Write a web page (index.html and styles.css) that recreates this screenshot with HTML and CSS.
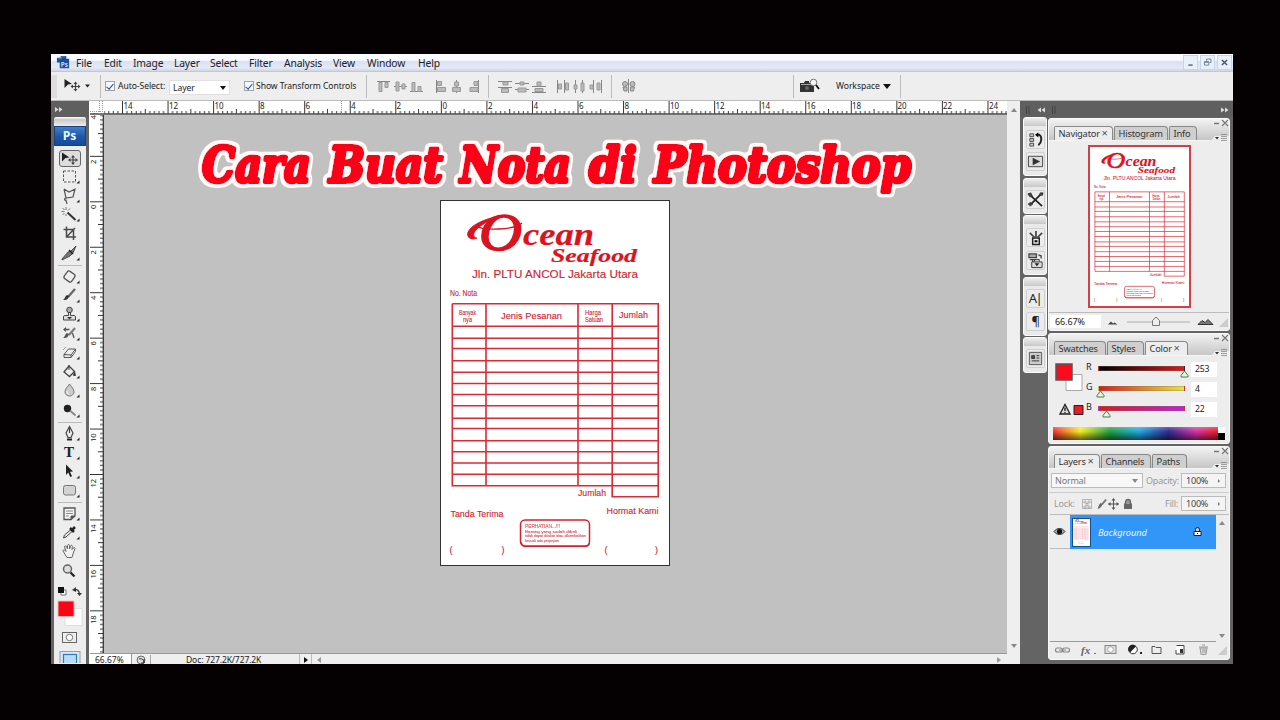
FILE: index.html
```html
<!DOCTYPE html>
<html lang="id">
<head>
<meta charset="utf-8">
<title>Cara Buat Nota di Photoshop</title>
<link rel="stylesheet" href="styles.css">
</head>
<body>
<div class="window">
  <header class="menubar">
    <svg class="app-logo" viewBox="0 0 16 16"><path d="M1 3h4V1h6v3h3v10H4V8H1z" fill="#1b4e94"/><path d="M2 4h4V2h4" stroke="#4a86c8" fill="none"/><text x="5" y="13" font-size="7" fill="#b9dcff">Ps</text></svg>
    <nav class="menu"><span>File</span><span>Edit</span><span>Image</span><span>Layer</span><span>Select</span><span>Filter</span><span>Analysis</span><span>View</span><span>Window</span><span>Help</span></nav>
    <div class="win-buttons">
      <svg viewBox="0 0 15 15"><path d="M5 10.5h5" stroke="#4d6074" stroke-width="1.6"/></svg>
      <svg viewBox="0 0 15 15"><path d="M6.500 6V3.500h5v4H10M4 6.500h5v4H4zM4 7.300h5" stroke="#66788a" fill="none"/></svg>
      <svg viewBox="0 0 15 15"><path d="M4.500 4.500l6 6M10.500 4.500l-6 6" stroke="#44576b" stroke-width="1.600"/></svg>
    </div>
  </header>

  <div class="options">
    <div class="opt move">
      <svg width="34" height="24" viewBox="0 0 34 24"><use href="#i-move" x="4" y="1"/><path d="M28 10.500h5l-2.500 3z" fill="#222"/></svg>
    </div>
    <div class="opt auto">
      <i class="check"></i><span class="t-auto">Auto-Select:</span>
      <div class="combo"><span>Layer</span><b class="arrow"></b></div>
      <i class="check second"></i><span class="t-show">Show Transform Controls</span>
    </div>
    <div class="opt align">
      <svg width="112" height="24" viewBox="374 74 112 24" fill="#bbb" stroke="#999">
        <path d="M377 81.500h13M394 86.500h13M410 91.500h13M436.500 80v13M456.500 80v13M478.500 80v13" stroke="#858585"/>
        <path d="M379 82.500h3v9h-3zM385 82.500h3v5h-3zM396 82h3v9h-3zM402 84h3v5h-3zM412 82.500h3v9h-3zM418 86.500h3v5h-3zM437.500 81.500h4v4h-4zM437.500 87.500h8v4h-8zM454.500 82h4v4h-4zM452.500 87.500h8v4h-8zM474 81.500h4v4h-4zM470 87.500h8v4h-8z"/>
      </svg>
    </div>
    <div class="opt dist">
      <svg width="118" height="24" viewBox="490 74 118 24" fill="#bbb" stroke="#999">
        <path d="M499 81.500h14M499 87.500h14M516 83.500h14M516 89.500h14M533 86.500h14M533 92.500h14M558.500 80v13M565.500 80v13M576.500 80v13M583.500 80v13M594.500 80v13M602.500 80v13" stroke="#858585"/>
        <path d="M504 82h5v3h-5zM502.500 88.500h7v4h-7zM521 82h4v3h-4zM519 88h8v4h-8zM538 82h4v4h-4zM536 88.500h8v3h-8zM559.500 84h3v5h-3zM566.500 83h3v7h-3zM575 85h3v4h-3zM582 83h3v8h-3zM591 85h3v4h-3zM598 83h3v7h-3z"/>
      </svg>
    </div>
    <div class="opt auto-align">
      <svg width="30" height="24" viewBox="614 74 30 24" fill="#bbb" stroke="#888"><path d="M628.500 79v14"/><circle cx="625" cy="84" r="2.500"/><circle cx="632.500" cy="84" r="2.500"/><path d="M623 87h4v4h-3zM630.500 87h4l-1 4h-3z"/></svg>
    </div>
    <div class="opt bridge">
      <svg width="42" height="24" viewBox="793 74 42 24"><path d="M799 83h4l1-2h4v2h5v9h-14z" fill="#333"/><path d="M800 84.500h12" stroke="#aaa"/><circle cx="806" cy="88" r="2" fill="#666"/><circle cx="812.500" cy="82.500" r="3.300" fill="#f4f4f4" stroke="#777"/><path d="M815 85l3 4" stroke="#111" stroke-width="1.800"/></svg>
      <span class="t-ws">Workspace</span><b class="arrow"></b>
    </div>
  </div>

  <main class="work">
    <aside class="toolbox">
      <div class="dock-head"><svg width="10" height="7" viewBox="0 0 10 7"><path d="M1 1l3.500 2.500L1 6zM5 1l3.500 2.500L5 6z" fill="#ddd"/></svg></div>
      <div class="tools">
        <div class="grip"></div>
        <div class="ps">Ps</div>
        <div class="tg first">
          <div class="tool on"><svg viewBox="0 0 24 19"><use href="#i-move" x="1.500" y="-.5"/></svg></div>
          <div class="tool"><svg viewBox="0 0 24 19"><rect x="5.500" y="4" width="12" height="11" fill="none" stroke="#555" stroke-dasharray="2.500 1.500"/><use href="#i-c"/></svg></div>
          <div class="tool"><svg viewBox="0 0 24 19"><path d="M6 3l5 3 6-3-2 8-7 1-2-9M8 12c-2 0-2 3 0 2l1 4" fill="none" stroke="#555" stroke-width="1.200"/><use href="#i-c"/></svg></div>
          <div class="tool"><svg viewBox="0 0 24 19"><path d="M9.500 7.500l8 7.500" stroke="#333" stroke-width="2"/><path d="M8 2v3M8 9v2M3.500 6.500h3M10 5.500l2-2M4.500 3l2 2M4.500 10l2-2" stroke="#777"/><use href="#i-c"/></svg></div>
          <div class="tool"><svg viewBox="0 0 24 19"><path d="M8.500 2.500v10.500H18M5.500 5.500h10V16M9 12.500l8-8.500" fill="none" stroke="#4a4a4a" stroke-width="1.500"/></svg></div>
          <div class="tool"><svg viewBox="0 0 24 19"><path d="M4 15L10 8l3-1 5-5-3 7-3 3-8 4z" fill="#777" stroke="#333" stroke-width=".8"/><path d="M11 6l4 4" stroke="#222" stroke-width="1.500"/><use href="#i-c"/></svg></div>
        </div>
        <hr>
        <div class="tg">
          <div class="tool"><svg viewBox="0 0 24 19"><rect x="7" y="5" width="9" height="9" rx="2" transform="rotate(35 11.500 9.500)" fill="#eee" stroke="#555" stroke-width="1.300"/><use href="#i-c"/></svg></div>
          <div class="tool"><svg viewBox="0 0 24 19"><path d="M17 3l-7 8" stroke="#666" stroke-width="2.300"/><path d="M11 10c-1 4-3 4-6 4 2-1 2-4 4-5z" fill="#333"/><use href="#i-c"/></svg></div>
          <div class="tool"><svg viewBox="0 0 24 19"><circle cx="11.500" cy="5" r="2.800" fill="#aaa" stroke="#444"/><path d="M10.500 7.500v3H6.500a1.500 1.500 0 00-1 1.500v3h12v-3a1.500 1.500 0 00-1-1.500h-4v-3z" fill="#ddd" stroke="#444"/><path d="M9 12h5l-2.500 2.500z" fill="#333"/><use href="#i-c"/></svg></div>
          <div class="tool"><svg viewBox="0 0 24 19"><path d="M17 4l-6 7" stroke="#777" stroke-width="2"/><path d="M11 10c-1 4-3 4-6 4 2-1 2-4 4-5z" fill="#555"/><path d="M6 5.500h5.500M14.500 9l1.500 5" fill="none" stroke="#555" stroke-width="1.300"/><path d="M8 3v5L5 5.500z" fill="#555"/><use href="#i-c"/></svg></div>
          <div class="tool"><svg viewBox="0 0 24 19"><path d="M6 11.500l4.500-5.500h7l-4.500 6zM6 11.500v3h7v-2.500M13 14.500l4.500-6V6" fill="#eee" stroke="#555"/><path d="M5 7l3-3" stroke="#999"/><use href="#i-c"/></svg></div>
          <div class="tool"><svg viewBox="0 0 24 19"><path d="M6 10l5-6 5.500 5.500-5 5z" fill="#eee" stroke="#444" stroke-width="1.300"/><path d="M11 8V3M16.500 9.500l1 4h-2z" fill="#333" stroke="#444"/><use href="#i-c"/></svg></div>
          <div class="tool"><svg viewBox="0 0 24 19"><path d="M11.500 3c2 3 4.500 5 4.500 8a4.500 4 0 01-9 0c0-3 2.500-5 4.500-8z" fill="#ccc" stroke="#777"/><path d="M9 10c0 2 1 3 2 3" stroke="#fff" fill="none"/><use href="#i-c"/></svg></div>
          <div class="tool"><svg viewBox="0 0 24 19"><circle cx="9.500" cy="7.500" r="3.700" fill="#222"/><path d="M12.500 10l5 4.500" stroke="#888" stroke-width="1.800"/><use href="#i-c"/></svg></div>
        </div>
        <hr>
        <div class="tg">
          <div class="tool"><svg viewBox="0 0 24 19"><path d="M11.500 2.500L8 9l2 4.500h3L15 9zM11.500 3v6" fill="#eee" stroke="#444" stroke-width="1.200"/><path d="M9 15.500h5" stroke="#222" stroke-width="2"/><use href="#i-c"/></svg></div>
          <div class="tool type">T<svg viewBox="0 0 24 19"><use href="#i-c"/></svg></div>
          <div class="tool"><svg viewBox="0 0 24 19"><path d="M8 2.500l7 7-3 .2 2 4.500-1.800.8-1.900-4.500L8 13z" fill="#222"/><use href="#i-c"/></svg></div>
          <div class="tool"><svg viewBox="0 0 24 19"><rect x="5.500" y="4.500" width="12" height="9.500" rx="2" fill="#d2d2d2" stroke="#777"/><use href="#i-c"/></svg></div>
        </div>
        <hr>
        <div class="tg">
          <div class="tool"><svg viewBox="0 0 24 19"><path d="M6 4h11v8l-4 3.500H6z" fill="#f4f4f4" stroke="#555" stroke-width="1.300"/><path d="M8 7h7M8 9.500h7M8 12h3" stroke="#888"/><path d="M13 15v-3h4" fill="#555" stroke="#555"/><use href="#i-c"/></svg></div>
          <div class="tool"><svg viewBox="0 0 24 19"><path d="M5.500 15l1-3 6-5 1.500 1.500-6 5.500z" fill="#eee" stroke="#444"/><path d="M12 5l4 4M14 7l3-3" stroke="#222" stroke-width="2.500"/><use href="#i-c"/></svg></div>
          <div class="tool"><svg viewBox="0 0 24 19"><path d="M8 14l-3-5c0-2 2-1 3 .5L6.500 5c0-1.500 1.800-1.500 2.200 0l.8 2V3.500c.2-1.500 2-1.200 2 0V7l1-3c.5-1.200 2-.8 1.800.6L14 7.500l1.500-1.700c1-.8 1.800 0 1.300 1.200L15 12l-1 3.500H9z" fill="#f2f2f2" stroke="#666"/></svg></div>
          <div class="tool"><svg viewBox="0 0 24 19"><circle cx="9.500" cy="7" r="4" fill="#ddd" stroke="#666" stroke-width="1.500"/><path d="M12.500 10.500l4 4" stroke="#222" stroke-width="2.300"/></svg></div>
        </div>
        <svg class="swatches" viewBox="54 583 32 81" width="32" height="81">
          <path d="M61 591h5v5h-5z" fill="#fff" stroke="#777"/><path d="M58 588h6v6h-6z" fill="#111"/>
          <path d="M74 591c3-1 5 0 5.500 4" stroke="#333" stroke-width="1.300" fill="none"/><path d="M76 588v5l-4-2zM77 594h5l-2.500 3z" fill="#333"/>
          <path d="M65 609.500h17v17H65z" fill="#fff" stroke="#ddd"/><path d="M58 602h16v15.500H58z" fill="#fb0516" stroke="#f2b8b8"/>
          <rect x="62.500" y="633.500" width="14" height="10" fill="#eee" stroke="#666"/><circle cx="69.500" cy="638.500" r="3.200" fill="#fff" stroke="#777"/>
          <rect x="60" y="652.500" width="20" height="14" fill="#d9e7f5" stroke="#99a"/><rect x="63.500" y="655.500" width="13" height="10" fill="#b7dcf6" stroke="#2f79b5" stroke-width="1.200"/>
        </svg>
      </div>
    </aside>

    <section class="doc">
      <svg class="hruler" viewBox="90 101 917 14" width="917" height="14">
        <defs><pattern id="ht" x="122" y="101" width="45.550" height="14" patternUnits="userSpaceOnUse">
          <path d="M.5 0v13" stroke="#333" stroke-width="1"/>
          <path d="M5 10v3M9.600 10v3M14.200 10v3M18.700 10v3M27.800 10v3M32.400 10v3M36.900 10v3M41.500 10v3" stroke="#333"/><path d="M23.300 8v5" stroke="#333"/></pattern></defs>
        <path d="M90 101h917v14H90z" fill="#fff"/><path d="M104 101h903v14H104z" fill="url(#ht)"/>
        <path d="M90 114h917" stroke="#444" stroke-width="1.400"/><path d="M102.500 101v14M99.500 101v14M341.500 101v13" stroke="#999" stroke-dasharray="1 1"/><path d="M90 111.500h14" stroke="#999" stroke-dasharray="1 1"/>
        <g class="rt"><text x="123.500" y="109">14</text><text x="169" y="109">12</text><text x="214.500" y="109">10</text><text x="260" y="109">8</text><text x="305.500" y="109">6</text><text x="351" y="109">4</text><text x="396.500" y="109">2</text><text x="442.500" y="109">0</text><text x="488" y="109">2</text><text x="533.500" y="109">4</text><text x="579" y="109">6</text><text x="624.500" y="109">8</text><text x="670" y="109">10</text><text x="715.500" y="109">12</text><text x="761" y="109">14</text><text x="806.500" y="109">16</text><text x="852" y="109">18</text><text x="897.500" y="109">20</text><text x="943" y="109">22</text><text x="989" y="109">24</text></g>
      </svg>
      <div class="doc-mid">
        <svg class="vruler" viewBox="90 115 14 538" width="14" height="538">
          <defs><pattern id="vt" x="90" y="201.300" width="14" height="45.450" patternUnits="userSpaceOnUse">
            <path d="M0 .5h13" stroke="#333"/><path d="M10 5h3M10 9.600h3M10 14.100h3M10 18.700h3M10 27.700h3M10 32.300h3M10 36.800h3M10 41.400h3M8 23.200h5" stroke="#333"/></pattern></defs>
          <path d="M90 115h14v538H90z" fill="#fff"/><path d="M90 115h14v538H90z" fill="url(#vt)"/><path d="M103.300 115v538" stroke="#333" stroke-width="1.300"/>
          <g class="rt v"><text transform="translate(96 119.500) rotate(-90)">4</text><text transform="translate(96 164) rotate(-90)">2</text><text transform="translate(96 209) rotate(-90)">0</text><text transform="translate(96 254.500) rotate(-90)">2</text><text transform="translate(96 300) rotate(-90)">4</text><text transform="translate(96 345.500) rotate(-90)">6</text><text transform="translate(96 391) rotate(-90)">8</text><text transform="translate(96 442) rotate(-90)">10</text><text transform="translate(96 487.500) rotate(-90)">12</text><text transform="translate(96 533) rotate(-90)">14</text><text transform="translate(96 578.500) rotate(-90)">16</text><text transform="translate(96 624) rotate(-90)">18</text></g>
        </svg>
        <svg class="canvas" viewBox="104 115 903 538" width="903" height="538">
          <defs>
            <filter id="halo" x="-5%" y="-20%" width="110%" height="140%">
              <feMorphology in="SourceAlpha" operator="dilate" radius="2"/><feGaussianBlur stdDeviation="1.500"/>
              <feColorMatrix values="0 0 0 0 1  0 0 0 0 .95  0 0 0 0 .94  0 0 0 6 -.5"/><feMerge><feMergeNode/><feMergeNode in="SourceGraphic"/></feMerge>
            </filter>
            <symbol id="nota" viewBox="441 201 228 364" preserveAspectRatio="none">
              <path d="M441 201h228v364H441z" fill="#fff"/>
              <g class="brand"><text class="big-o" x="479" y="250" font-size="52" textLength="43" lengthAdjust="spacingAndGlyphs">O</text>
              <path d="M477 238c-6 3-11-1-9-6 3-7 16-13 31-16-12 5-23 12-25 17-1 3 1 5 3 5z" stroke-width=".8"/>
              <path d="M476 226c8 5 38 4 46-3" fill="none" stroke-width="1.300"/>
              <text x="523" y="244.500" font-size="32" textLength="71" lengthAdjust="spacingAndGlyphs">cean</text>
              <text x="551" y="261.500" font-size="18.500" textLength="86" lengthAdjust="spacingAndGlyphs">Seafood</text></g>
              <g class="sans"><text x="472" y="277.500" font-size="10.500" textLength="166" lengthAdjust="spacingAndGlyphs">Jln. PLTU ANCOL Jakarta Utara</text>
              <text x="450" y="296" font-size="8.500" textLength="27" lengthAdjust="spacingAndGlyphs">No. Nota</text>
              <text x="459" y="314.500" font-size="7.500" textLength="17" lengthAdjust="spacingAndGlyphs">Banyak</text><text x="463" y="322" font-size="6.500" textLength="9" lengthAdjust="spacingAndGlyphs">nya</text>
              <text x="501" y="318.500" font-size="8.500" textLength="61" lengthAdjust="spacingAndGlyphs">Jenis Pesanan</text>
              <text x="585" y="314.500" font-size="7.500" textLength="16" lengthAdjust="spacingAndGlyphs">Harga</text><text x="585" y="322" font-size="6.500" textLength="18" lengthAdjust="spacingAndGlyphs">Satuan</text>
              <text x="619" y="318" font-size="8.500" textLength="29" lengthAdjust="spacingAndGlyphs">Jumlah</text>
              <text x="578" y="496" font-size="8.500" textLength="28" lengthAdjust="spacingAndGlyphs">Jumlah</text>
              <text x="450.500" y="516.500" font-size="8.500" textLength="53" lengthAdjust="spacingAndGlyphs">Tanda Terima</text>
              <text x="606.500" y="514" font-size="9" textLength="52" lengthAdjust="spacingAndGlyphs">Hormat Kami</text>
              <text x="449.500" y="552.500" font-size="9">(</text><text x="501.500" y="552.500" font-size="9">)</text><text x="604.500" y="552.500" font-size="9">(</text><text x="655" y="552.500" font-size="9">)</text>
              <g opacity=".8"><text x="525" y="527.500" font-size="5.500" textLength="35" lengthAdjust="spacingAndGlyphs">PERHATIAN...!!!</text>
              <text x="525" y="532.500" font-size="4.200" textLength="52" lengthAdjust="spacingAndGlyphs">Barang yang sudah dibeli</text>
              <text x="525" y="537" font-size="4.200" textLength="61" lengthAdjust="spacingAndGlyphs">tidak dapat ditukar atau dikembalikan</text>
              <text x="525" y="541.500" font-size="4.200" textLength="34" lengthAdjust="spacingAndGlyphs">kecuali ada perjanjian</text></g></g>
              <path d="M452.300 303.700h205.900v193h-46v-193M452.300 303.700v182h205.900M486 303.700v182M578 303.700v182M452.300 326.300h206M452.300 338.300h206M452.300 348.500h206M452.300 360.700h206M452.300 372.300h206M452.300 383.500h206M452.300 394.500h206M452.300 405.800h206M452.300 418.200h206M452.300 428.500h206M452.300 440.700h206M452.300 451.700h206M452.300 463h206M452.300 474.300h206" fill="none" stroke="#da2a35" stroke-width="1.600"/>
              <rect x="520.500" y="520" width="69" height="26" rx="4.500" fill="none" stroke="#d6202c" stroke-width="1.500"/><path d="M521 542q1 4.500 5 4.500h59q4 0 4.500-4" fill="none" stroke="#d6202c" stroke-width="1.200"/>
            </symbol>
          </defs>
          <rect x="440.500" y="200.500" width="229" height="365" fill="#fff" stroke="#333"/>
          <use href="#nota" x="441" y="201" width="228" height="364"/>
          <g class="headline" filter="url(#halo)">
            <text x="202" y="182.300" textLength="109" lengthAdjust="spacingAndGlyphs">Cara</text>
            <text x="329" y="182.300" textLength="114" lengthAdjust="spacingAndGlyphs">Buat</text>
            <text x="460" y="182.300" textLength="111" lengthAdjust="spacingAndGlyphs">Nota</text>
            <text x="589" y="182.300" textLength="48" lengthAdjust="spacingAndGlyphs">di</text>
            <text x="654" y="182.300" textLength="257" lengthAdjust="spacingAndGlyphs">Photoshop</text>
          </g>
        </svg>
      </div>
      <div class="status"><span class="zoom">66.67%</span><span class="ver"><svg width="11" height="10" viewBox="0 0 11 10"><circle cx="5" cy="5" r="4" fill="#ddd" stroke="#666"/><path d="M3 4c3-1 5 1 5 4M8 4v4H5" fill="none" stroke="#333"/></svg></span><span class="size">Doc: 727.2K/727.2K</span><span class="play"><i></i></span><span class="sb"><i class="l"></i><i class="r"></i></span></div>
    </section>
    <div class="vscroll"><i class="up"></i><i class="dn"></i></div>

    <section class="dock">
      <div class="dock-head right">
        <svg width="213" height="16" viewBox="1020 101 213 16" fill="#ddd"><path d="M1026.500 106v8M1029 106v8M1052.500 106v8M1055 106v8" stroke="#444"/><path d="M1041 107.500l-3.500 2.500 3.500 2.500zM1045 107.500l-3.500 2.500 3.500 2.500zM1221 107.500l3.500 2.500-3.500 2.500zM1225 107.500l3.500 2.500-3.500 2.500z"/></svg>
      </div>
      <div class="dock-cols">
        <div class="icons">
          <div class="ig h59"><i class="grip"></i>
            <svg class="ib" viewBox="0 0 18 18"><path d="M3 3h4v3H3zM3 8h4v3H3zM3 13h4v3H3z" fill="#ccc" stroke="#444"/><path d="M10 4h3c3 2 3 8-1 11" fill="none" stroke="#222" stroke-width="2"/><path d="M12 1.500v5.500L8.500 4z"/></svg>
            <svg class="ib" viewBox="0 0 18 18"><path d="M1.500 3.500h15v11h-15z" fill="#ddd" stroke="#444"/><path d="M6 5v8l8-4z" fill="#333"/></svg></div>
          <div class="ig h36"><i class="grip"></i>
            <svg class="ib" viewBox="0 0 18 18"><path d="M3 4l13 12M15 3L5 13" stroke="#222" stroke-width="1.800"/><path d="M1 3l3-1 2 4-3 0zM13 5l1-3 3 0-1 3M1 14l3-2 2 2-3 2" fill="#444" stroke="#333"/></svg></div>
          <div class="ig h60"><i class="grip"></i>
            <svg class="ib" viewBox="0 0 18 18"><path d="M6 9.500h7v7H6z" fill="#eee" stroke="#222" stroke-width="1.600"/><path d="M8 9L3 4M9.500 9V2M11 9l5-5" stroke="#444" stroke-width="1.800"/><path d="M8 12h3v2H8z"/></svg>
            <svg class="ib" viewBox="0 0 18 18"><path d="M2 2h8v4H2zM3 8h6M6 8v4M12 3l3 1v3" fill="#aaa" stroke="#444" stroke-width="1.300"/><path d="M5 10.500h11v6H5zM8 10V8h5v2" fill="#ddd" stroke="#333"/><path d="M8 12h5l-2.500 3z" fill="#222"/></svg></div>
          <div class="ig h59"><i class="grip"></i>
            <div class="ib chr">A|</div>
            <div class="ib par">¶</div></div>
          <div class="ig h36"><i class="grip"></i>
            <svg class="ib" viewBox="0 0 18 18"><path d="M2.500 2.500h13v13h-13z" fill="#ccc" stroke="#555"/><path d="M5 6h3v3H5zM5 11.500h8M10 6h3M10 8.500h3" stroke="#333" fill="#555"/></svg></div>
        </div>
        <div class="panels">
          <div class="panel nav">
            <div class="tabs"><span class="tab act" style="width:59px">Navigator <em>×</em></span><span class="tab" style="width:54px">Histogram</span><span class="tab" style="width:28px">Info</span><svg class="pc" viewBox="0 0 20 26"><use href="#i-pc"/></svg></div>
            <div class="nav-body"><div class="thumb"><svg width="99" height="159"><use href="#nota" width="99" height="159"/></svg></div></div>
            <div class="nav-foot"><span>66.67%</span>
              <svg width="128" height="17" viewBox="1101 313 128 17"><path d="M1108 324.500l3-3 2 2 1.500-1 3 2z" fill="#444"/><path d="M1127 322h63" stroke="#aaa"/><path d="M1152.500 325.500v-5l3.500-3.500 3.500 3.500v5z" fill="#eee" stroke="#777"/><path d="M1198 324.500l4-4 3 2 3-3 5 5z" fill="#777" stroke="#333"/><path d="M1219 327l9-9v9z" fill="#ccc"/></svg></div>
          </div>
          <div class="panel color">
            <div class="tabs"><span class="tab" style="width:52px">Swatches</span><span class="tab" style="width:37px">Styles</span><span class="tab act" style="width:43px">Color <em>×</em></span><svg class="pc" viewBox="0 0 20 26"><use href="#i-pc"/></svg></div>
            <div class="color-body">
              <svg class="fgbg" width="34" height="62" viewBox="1052 359 34 62"><path d="M1066 375.500h16v16h-16z" fill="#fff" stroke="#aaa"/><path d="M1056 365h16v16h-16z" fill="#fb0b1c" stroke="#555" stroke-width="1.500"/><path d="M1060 415l5-9.500 5 9.500z" fill="#ddd" stroke="#222" stroke-width="1.300"/><path d="M1065 408.500v3.500M1065 413v1" stroke="#111" stroke-width="1.300"/><path d="M1074 406.500h9v9h-9z" fill="#e81c28" stroke="#222"/></svg>
              <div class="sliders">
                <div class="sl"><b>R</b><div class="track r"><svg style="left:81px" viewBox="0 0 9 8"><use href="#i-knob"/></svg></div><span>253</span></div>
                <div class="sl"><b>G</b><div class="track g"><svg style="left:-3px" viewBox="0 0 9 8"><use href="#i-knob"/></svg></div><span>4</span></div>
                <div class="sl"><b>B</b><div class="track b"><svg style="left:3px" viewBox="0 0 9 8"><use href="#i-knob"/></svg></div><span>22</span></div>
              </div>
            </div>
            <div class="ramp"><i></i></div>
          </div>
          <div class="panel layers">
            <div class="tabs"><span class="tab act" style="width:46px">Layers <em>×</em></span><span class="tab" style="width:50px">Channels</span><span class="tab" style="width:35px">Paths</span><svg class="pc" viewBox="0 0 20 26"><use href="#i-pc"/></svg></div>
            <div class="lrow blend"><span class="mode">Normal<i></i></span><label>Opacity:</label><span class="pct">100%<i></i></span></div>
            <div class="lrow lock"><label>Lock:</label>
              <svg width="60" height="12" viewBox="0 0 60 12"><path d="M2.500 1.500h9v9h-9zM4 3h2v2H4zM8 3h2v2H8zM6 5.500h2v2H6zM4 8h2v2H4zM8 8h2v2H8z" fill="#f4f4f4" stroke="#999" stroke-width=".7"/><path d="M26 1.500l-4 5" stroke="#777" stroke-width="2"/><path d="M22.500 6c-1 3-2 4-5 5 1-2 1-4 3-6z" fill="#666"/><path d="M33.500 1v10M28.500 6h10" stroke="#555"/><path d="M33.500 0l2 2.500h-4zM33.500 12l2-2.500h-4zM28 6l2.500-2v4zM39 6l-2.500-2v4z" fill="#555"/><path d="M44 5.500h8V11h-8z" fill="#666"/><path d="M45.500 6V4a2.500 2.500 0 015 0v2" fill="#999" stroke="#666" stroke-width="1.300"/></svg>
              <label class="fill">Fill:</label><span class="pct">100%<i></i></span></div>
            <div class="list">
              <div class="list-main">
                <div class="layer"><div class="eye"><svg width="13" height="9" viewBox="0 0 13 9"><path d="M1 4.500c3-4 8-4 11 0-3 4-8 4-11 0z" fill="#aaa" stroke="#333"/><circle cx="6.500" cy="4.500" r="2.600" fill="#111"/></svg></div>
                  <div class="sel"><div class="lt"><svg width="16" height="26"><use href="#nota" width="16" height="26"/></svg></div><span>Background</span><svg width="9" height="10" viewBox="0 0 9 10"><path d="M1 4.500h7v4H1z" fill="#fff" stroke="#123"/><path d="M2.500 4V2.500a2 2 0 014 0V4" fill="#ccc" stroke="#123"/><path d="M4 6h1v1H4z"/></svg></div></div>
              </div>
              <div class="list-sb"><i class="up"></i><i class="dn"></i></div>
            </div>
            <svg class="lfoot" width="180" height="16" viewBox="1050 642 180 16">
              <g fill="none" stroke="#888" stroke-width="1.200"><rect x="1056.500" y="648" width="7" height="4" rx="2"/><rect x="1063.500" y="648" width="7" height="4" rx="2"/><path d="M1060 650h7"/></g>
              <text x="1082" y="653.500" class="fx">fx</text><path d="M1095 653h2v1h-2z" fill="#777"/>
              <rect x="1106" y="645.500" width="11" height="8" fill="#ddd" stroke="#888"/><circle cx="1111.500" cy="649.500" r="2.800" fill="#fff" stroke="#aaa"/>
              <circle cx="1134" cy="649.500" r="4.300" fill="#fff" stroke="#333"/><path d="M1137 646.500a4.300 4.300 0 10-6 6z" fill="#222"/><path d="M1141 652h2v2h-2z" fill="#222"/>
              <path d="M1153 646.500h3l1 1h5v6h-9z" fill="#eee" stroke="#555"/>
              <path d="M1177.500 645.500h7.500v8.500h-8v-4" fill="#fff" stroke="#444"/><path d="M1181 649h3v4h-3z" fill="#333"/>
              <path d="M1201 648h7l-1 6.500h-5zM1200 647h9M1203 645h3M1204 649v4M1206 649v4" fill="#ddd" stroke="#999"/>
              <path d="M1219 655l9-9v9z" fill="#ccc"/>
            </svg>
          </div>
        </div>
      </div>
    </section>
  </main>
</div>
<svg class="defs" width="0" height="0"><defs>
  <g id="i-move"><path d="M3.500 4l7.500 5-4 .5-3.500 3.500z" fill="#222"/><path d="M14.500 8v7M11 11.500h7" stroke="#444" stroke-width="1.200"/><path d="M14.500 6.500l2 2.500h-4zM14.500 16.500l2-2.500h-4zM9.500 11.500l2.500-2v4zM19.500 11.500l-2.500-2v4z" fill="#444"/></g>
  <path id="i-c" d="M18.500 16.500h3v-3z" fill="#222"/>
  <g id="i-pc"><path d="M5 6.500h5" stroke="#777" stroke-width="1.500"/><path d="M13 3l6 6M19 3l-6 6" stroke="#777" stroke-width="1.200"/><path d="M0 26l6-7h14v7z" fill="#ededed"/><path d="M6 20h4l-2 2.500z" fill="#333"/><path d="M12 17.500h6M12 19.500h6M12 21.500h6M12 23.500h6" stroke="#888" stroke-width=".8"/></g>
  <path id="i-knob" d="M1 7V5.500L4.500 1 8 5.500V7z" fill="#e6f5e0" stroke="#4b7a45"/>
</defs></svg>
</body>
</html>
```
FILE: styles.css
```css
* { box-sizing: border-box; }
body { margin: 0; width: 1280px; height: 720px; background: #050002; overflow: hidden; padding: 54px 0 0 51px; font-family: "Noto Sans", "Open Sans", sans-serif; font-size: 9px; color: #222; }
svg { display: block; flex: none; }
.defs { position: absolute; }
.window { width: 1182px; height: 610px; display: flex; flex-direction: column; overflow: hidden; background: #646464; }

.menubar { height: 18px; flex: none; display: flex; align-items: center; background: linear-gradient(#fbfcff 0 35%, #dbe1f3 45%, #e4e9f7 80%, #d2d6e2); border-bottom: 1px solid #c4c7cf; }
.app-logo { width: 15px; height: 15px; margin-left: 5px; font-weight: bold; }
.menu { display: grid; grid-template-columns: 28px 29px 41px 36px 39px 35px 49px 34px 51px 30px; margin-left: 5px; font-size: 10.3px; letter-spacing: -.15px; line-height: 16px; white-space: nowrap; }
.win-buttons { margin-left: auto; margin-right: 1px; display: flex; gap: 2px; }
.win-buttons svg { width: 15px; height: 15px; background: #e8f1fa; border: 1px solid #c3d5e6; }

.options { height: 29px; flex: none; display: flex; align-items: center; background: #eee; font-size: 8.6px; letter-spacing: -.07px; white-space: nowrap; border-bottom: 1px solid #bbb; }
.opt { height: 23px; display: flex; align-items: center; border-right: 1px solid #bbb; }
.move { width: 50px; padding-left: 6px; box-shadow: inset 6px 0 #ddd; }
.auto { width: 266px; padding-left: 4px; }
.check { width: 10px; height: 10px; border: 1px solid #97a3b0; background: #f6f9fd; display: flex; align-items: center; justify-content: center; }
.check::after { content: ""; width: 3px; height: 6px; border: solid #2b4a86; border-width: 0 1.500px 1.500px 0; transform: rotate(40deg) translate(-.5px, -.5px); }
.check.second { margin-left: 14px; }
.t-auto { width: 51px; margin-left: 3px; }
.t-show { margin-left: 2px; }
.combo { width: 61px; height: 15px; background: #fff; display: flex; align-items: center; justify-content: space-between; padding: 0 3px; border: 1px solid #e0e0e0; margin-top: 3px; }
.arrow { border: 4px solid transparent; border-top: 5px solid #111; border-bottom: 0; }
.combo .arrow { border-width: 4px 3px 0; }
.align { width: 122px; padding-left: 7px; }
.dist { width: 123px; }
.auto-align { width: 181px; padding-left: 2px; }
.bridge { width: 108px; border-left: 1px solid #bbb; }
.auto-align { border-right: 0; }
.t-ws { width: 47px; }

.work { flex: 1; display: flex; min-height: 0; }
.toolbox { width: 38px; background: #646464; flex: none; display: flex; flex-direction: column; }
.dock-head { height: 16px; flex: none; background: #5f5f5f; padding: 5px 0 0 3px; }
.dock-head.right { padding: 0; }
.tools { width: 32px; margin-left: 3px; flex: 1; background: #ededed; border-radius: 3px 3px 0 0; overflow: hidden; }
.tools .grip { height: 9px; background: linear-gradient(#fff, #c9c9c9 30%, #eee); }
.ps { height: 20px; background: linear-gradient(#3f7fc8, #1d57a8 55%, #17499a); border: 1px solid #173f7d; color: #e9f5ff; font: bold 12px/18px "Open Sans", sans-serif; text-align: center; padding-right: 1px; }
.tg { display: flex; flex-direction: column; }
.tg.first { padding-top: 2px; }
.tool { height: 19.140px; padding-left: 4px; }
.tool svg { width: 24px; height: 19px; }
.tool.on { background: #ddd; border: 1px solid #666; border-radius: 3px; width: 22px; height: 17px; margin: 2px 0 0 5px; padding: 0; }
.tool.on svg { margin: -2px 0 0 -3px; }
.tool.type { display: flex; font: bold 15px/19px "Liberation Serif", serif; padding-left: 10px; }
.tool.type svg { margin-left: -16px; }
.tools hr { border: 0; height: 1px; background: #bbb; margin: 2px 4px 1px; }
.swatches { margin-top: 1px; }

.doc { width: 918px; flex: none; padding-left: 1px; display: flex; flex-direction: column; background: #fff; }
.doc-mid { display: flex; height: 538px; flex: none; }
.canvas { background: #c1c1c1; }
.rt { font: 8px "Noto Sans", sans-serif; fill: #222; }
.rt.v { font-size: 7.500px; }
.headline { font: italic bold 49px "DejaVu Serif", serif; fill: #fb0017; stroke: #fb0017; stroke-width: 4px; stroke-linejoin: round; }
.brand { font-family: "Liberation Serif", serif; font-style: italic; font-weight: bold; fill: #dc1220; stroke: #dc1220; stroke-width: .2px; }
.big-o { font-weight: normal; stroke-width: 1.500px; }
.sans { font-family: "Liberation Sans", sans-serif; fill: #cf2430; stroke: #cf2430; stroke-width: .12px; }
.status { flex: 1; display: flex; align-items: center; background: #efefef; font-size: 8.500px; line-height: 11px; white-space: nowrap; border-top: 1px solid #999; }
.status .zoom { width: 42px; padding-left: 5px; background: #fff; border-right: 1px solid #999; }
.ver { width: 19px; padding-left: 4px; border-right: 1px solid #aaa; }
.size { width: 148px; padding-left: 35px; font-size: 8.500px; letter-spacing: -.1px; }
.play { width: 13px; height: 11px; border: solid #bbb; border-width: 0 1px; display: flex; justify-content: center; align-items: center; }
.play i, .sb i { border: 3px solid transparent; border-left: 4px solid #111; border-right: 0; }
.sb { flex: 1; display: flex; justify-content: space-between; padding: 0 6px 0 5px; }
.sb i { border-left-color: #999; }
.sb .l { transform: scaleX(-1); }
.vscroll { width: 13px; flex: none; background: #efefef; display: flex; flex-direction: column; justify-content: space-between; align-items: center; padding: 7px 0 16px; }
.up, .dn { border: 3px solid transparent; border-bottom: 4px solid #888; border-top: 0; }
.dn { transform: scaleY(-1); }

.dock { width: 213px; flex: none; background: #646464; display: flex; flex-direction: column; }
.dock-cols { display: flex; padding-left: 3px; flex: 1; }
.icons { width: 25px; display: flex; flex-direction: column; gap: 1.500px; flex: none; padding-right: 1px; }
.ig { background: #e9e9e9; border: 1px solid #fafafa; border-radius: 3px; display: flex; flex-direction: column; align-items: center; justify-content: space-between; padding-bottom: 4px; }
.ig .grip { height: 8px; width: 100%; background: linear-gradient(#eee, #c8c8c8); }
.h59 { height: 59px; } .h36 { height: 36px; } .h60 { height: 60px; }
.ib { width: 19px; height: 19px; border: 1px solid #cfcfcf; border-radius: 2px; background: #ececec; }
.chr, .par { font-size: 13px; line-height: 17px; text-align: center; color: #222; letter-spacing: -1.500px; }
.panels { width: 182px; display: flex; flex-direction: column; gap: 2px; padding-top: 1px; }
.panel { background: #ededed; border: 1px solid #f8f8f8; border-radius: 3px; display: flex; flex-direction: column; overflow: hidden; }
.panel.nav { height: 213px; } .panel.color { height: 111px; } .panel.layers { height: 214px; }
.tabs { height: 22px; flex: none; display: flex; align-items: flex-end; gap: 1px; padding-left: 5px; background: linear-gradient(#f2f2f2, #c6c6c6); border-bottom: 1px solid #f5f5f5; }
.tab { height: 14.500px; background: #cfcfcf; border: 1px solid #888; border-bottom: 0; border-radius: 2px 4px 0 0; padding-left: 3.500px; font-size: 9.300px; line-height: 14px; letter-spacing: -.2px; white-space: nowrap; overflow: hidden; color: #333; }
.tab.act { background: #ededed; }
.tab em { font-style: normal; margin-left: -.5px; color: #555; font-size: 11px; line-height: 10px; }
.pc { width: 20px; height: 26px; margin-left: auto; align-self: flex-start; margin-top: -2px; }
.nav-body { flex: 1; padding: 4px 0 0 39px; }
.thumb { width: 103px; height: 163px; border: 2px solid #d4404a; }
.nav-foot { height: 18px; display: flex; margin-top: auto; border-top: 1px solid #bbb; align-items: center; font-size: 9px; letter-spacing: -.1px; }
.nav-foot span { width: 51px; height: 13px; line-height: 13px; padding-left: 5px; margin-left: 1px; background: #fff; }

.color-body { display: flex; height: 70px; padding-top: 2px; padding-left: 3px; }
.sliders { display: flex; flex-direction: column; width: 136px; padding-top: 1px; }
.sl { height: 20px; display: flex; align-items: center; }
.sl b { width: 12px; font-weight: normal; font-size: 9px; margin-top: -5px; }
.track { width: 87px; height: 5px; position: relative; margin-top: -2px; border: 1px solid #7775; }
.track svg { position: absolute; top: 3px; width: 9px; height: 8px; }
.track.r { background: linear-gradient(90deg, #000, #d81a1a); }
.track.g { background: linear-gradient(90deg, #d81a1a, #e8e43a); }
.track.b { background: linear-gradient(90deg, #d81a1a, #c322d0); }
.sl span { width: 26px; height: 15px; background: #fff; margin-left: 6px; padding-left: 4px; line-height: 15px; font-size: 8.700px; letter-spacing: -.2px; }
.ramp { height: 13px; margin: 1px 4px 0; background: linear-gradient(#fff4, transparent 35%, #0009), linear-gradient(90deg, #f03030, #f4ea20 16%, #20a040 33%, #20a8e0 50%, #302c90 67%, #d830a8 83%, #e82020 96%); display: flex; justify-content: flex-end; }
.ramp i { width: 7px; background: linear-gradient(#fff 50%, #000 50%); }

.lrow { height: 23px; display: flex; align-items: center; padding-left: 2px; color: #777; font-size: 9px; flex: none; letter-spacing: -.2px; white-space: nowrap; }
.lrow label { color: #999; }
.mode { width: 92px; height: 15px; border: 1px solid #bbb; background: #f8f8f8; display: flex; align-items: center; justify-content: space-between; padding: 0 4px 0 3px; margin-right: 3px; }
.mode i { border: 3px solid transparent; border-top: 4px solid #888; border-bottom: 0; }
.blend label { width: 35px; }
.pct { width: 45px; height: 15px; border: 1px solid #bbb; background: #f4f4f4; display: flex; align-items: center; justify-content: space-between; padding: 0 5px 0 4px; color: #444; }
.pct i { width: 0; border: 2px solid transparent; border-left: 2px solid #777; border-right: 0; }
.lock { border-top: 1px solid #ccc; height: 22px; padding-left: 5px; }
.lock label:first-child { width: 26px; }
.lock .fill { margin-left: 25px; width: 16px; }
.list { flex: 1; display: flex; border-top: 1px solid #bbb; margin-left: 1px; }
.list-main { width: 166px; border-bottom: 1px solid #999; }
.layer { display: flex; height: 34px; }
.eye { width: 20px; border-bottom: 1px solid #bbb; padding: 12px 0 0 3px; }
.sel { width: 147px; background: #3196f8; display: flex; align-items: center; color: #e9f5ff; font-style: italic; padding-left: 2px; font-size: 9.300px; letter-spacing: -.1px; }
.lt { border: 1px solid #10518f; width: 19px; height: 29px; background: #fff; padding: .5px; margin-right: 7px; }
.sel span { width: 95px; }
.list-sb { width: 12px; display: flex; flex-direction: column; justify-content: space-between; align-items: center; padding: 6px 0 4px; }
.lfoot { margin-bottom: 1px; }
.fx { font: italic bold 11px "Liberation Serif", serif; fill: #666; }
```
